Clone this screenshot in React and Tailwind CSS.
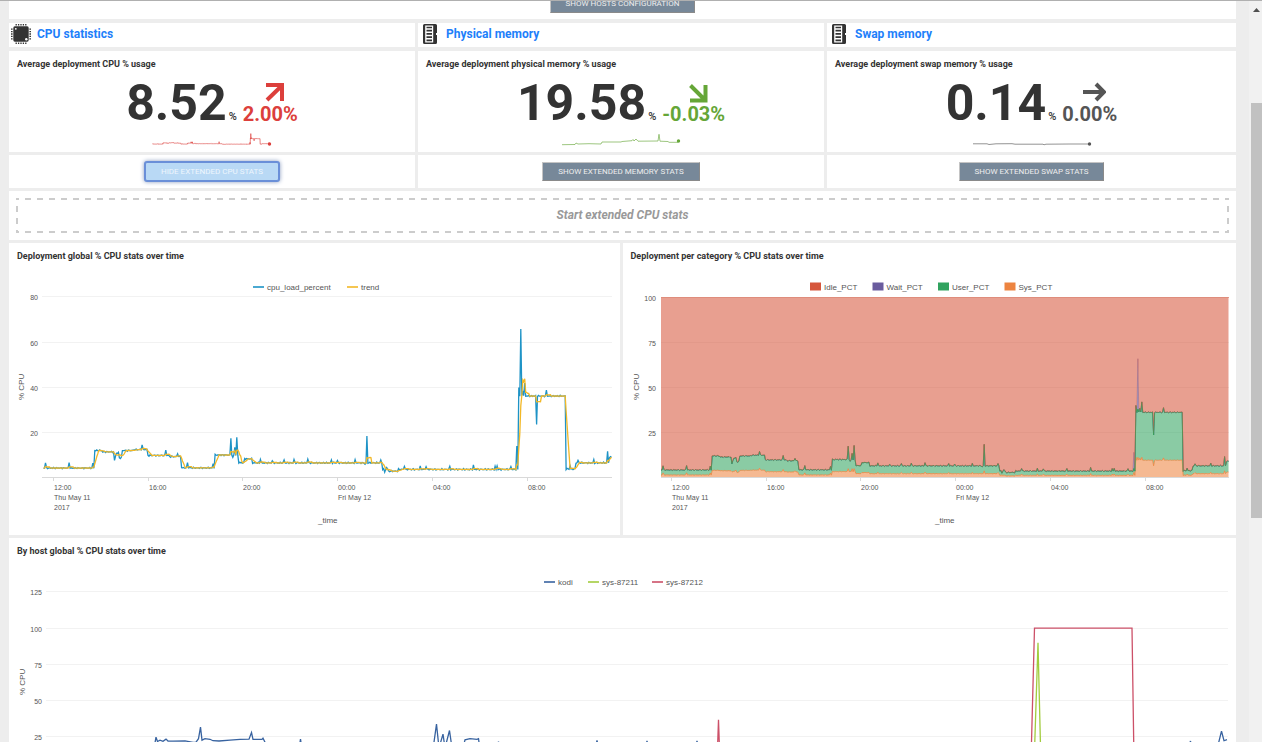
import React from 'react';

const POINTS = 576;

// [first five minute sample, level]
const LEVELS = [
  [0, 4.2], [26, 12], [30, 11.4], [36, 9.6], [37, 10.8], [38, 8.8], [40, 12], [46, 12.4],
  [53, 9.8], [64, 9.3], [70, 4.3], [87, 10], [99, 6.6], [102, 8.3], [106, 6.5],
  [172, 3.8], [175, 2.8], [180, 3.6], [241, 36.2], [265, 3.8], [270, 6.5], [287, 9],
];

const SPIKES = {
  1: 6.5, 13: 6.6, 25: 6.4, 36: 7.6, 38: 11.2, 39: 8.4, 50: 14.5, 62: 12.2, 68: 10.6, 73: 6.6, 86: 6.2,
  95: 17.4, 96: 9, 97: 13.4, 98: 17.8, 110: 8.1, 116: 7.4, 122: 7.8, 127: 8, 134: 8.2,
  146: 7.8, 149: 7.5, 158: 7.9, 163: 5.9, 164: 18.4, 171: 7.8, 173: 2.4, 174: 4.4, 183: 5, 191: 5.2, 194: 4.8,
  206: 5, 218: 5.6, 229: 5, 230: 5.1, 237: 4.9, 240: 14, 241: 40, 242: 66, 243: 38.5, 244: 42,
  250: 23.6, 255: 38.8, 267: 5.2, 271: 7.6, 279: 8, 286: 11.6,
};

function levelAt(sample) {
  let value = LEVELS[0][1];
  LEVELS.forEach(([from, level]) => {
    if (sample >= from) value = level;
  });
  return value;
}

const noise = (i) => Math.sin(i * 12.9898) * Math.cos(i * 4.137) * 0.35;

const cpu = Array.from({ length: POINTS + 1 }, (_, i) => SPIKES[i / 2] ?? levelAt(i / 2) + noise(i));

const trend = cpu.map((_, i) => {
  const part = cpu.slice(Math.max(0, i - 4), i + 1);
  return part.reduce((a, b) => a + b, 0) / part.length;
});

const user = cpu.map((v, i) => {
  if (i === 484) return 38;
  if (i === 480) return 5;
  return v;
});

const sys = cpu.map((v, i) => {
  if (i === 500) return 6.5;
  const base = levelAt(i / 2);
  const share = base > 30 ? 9.6 : base * 0.33;
  return share + (v > base + 1 ? Math.min(1.6, (v - base) * 0.5) : noise(i) * 0.5);
});

const toPoints = (series, left, width, zero, unit) =>
  series
    .map((v, i) => `${(left + (i * width) / POINTS).toFixed(1)},${(zero - v * unit).toFixed(1)}`)
    .join(' ');

const toArea = (upper, lower, left, width, zero, unit) =>
  `${toPoints(upper, left, width, zero, unit)} ${toPoints(lower, left, width, zero, unit)
    .split(' ')
    .reverse()
    .join(' ')}`;

const TIMES = [
  ['12:00', 'Thu May 11', '2017'],
  ['16:00'],
  ['20:00'],
  ['00:00', 'Fri May 12'],
  ['04:00'],
  ['08:00'],
];

const hosts = [
  {
    color: '#3863a0',
    points: [
      [0, 15], [107, 16], [108, 20.5], [109, 24.5], [110.5, 21.5], [113, 22.4], [116, 21.6], [119, 23.1], [121, 21.8],
      [126, 21.7], [138, 21.9], [146, 20.8], [149, 21], [151.5, 23.4], [153.5, 31.4], [155, 22.4], [158, 23.4],
      [163, 23], [166, 22], [172, 21.8], [183, 22.4], [193, 23], [202, 23.1], [204.5, 27.7], [206, 22.9], [215, 22.9],
      [216, 23.8], [218, 21], [220, 16], [252, 16], [253.5, 23.1], [255, 16], [386, 16], [389.5, 33.5], [392, 17],
      [396, 26.6], [398, 17], [402.5, 29.1], [405, 17], [416, 17], [418, 22.6], [423, 23.4], [430, 22.9], [431.5, 23.4],
      [433, 16], [450, 16], [451.5, 21.4], [453, 16], [548, 16], [550, 22.2], [552, 16], [598, 16], [600, 21.8],
      [602, 16], [648, 16], [650, 21.8], [652, 16], [1141, 16], [1143.5, 21.8], [1145, 16], [1170, 16], [1174.5, 28.7],
      [1177, 22], [1180, 22.8],
    ],
  },
  { color: '#a2cc3e', points: [[0, 4], [987, 4], [991, 89.8], [994, 4], [1180, 4]] },
  {
    color: '#cc5068',
    points: [[0, 6], [670, 6], [671.5, 36.5], [673, 6], [984, 8], [987.5, 100], [1085, 100], [1087, 8], [1180, 6]],
  },
];

function Legend({ items, square }) {
  return items.map(({ x, label, color }) => (
    <g key={label}>
      {square ? (
        <rect x={x} y="21.5" width="11" height="8" fill={color} />
      ) : (
        <path d={`M${x} 26h11`} stroke={color} strokeOpacity="0.8" strokeWidth="2" />
      )}
      <text x={x + 14} y="29" fontSize="8" fill="#555">{label}</text>
    </g>
  ));
}

function TimeAxis({ first, step, left, right, title }) {
  return (
    <g>
      <path d={`M${left} 216.5H${right}`} stroke="#d9d9d9" />
      {TIMES.map((lines, i) => (
        <g key={lines[0]}>
          <path d={`M${Math.round(first + i * step) + 0.5} 217v3`} stroke="#d9d9d9" />
          {lines.map((line, n) => (
            <text key={line} x={Math.round(first + i * step) + 1} y={229 + n * 10} fontSize="7" fill="#555">
              {line}
            </text>
          ))}
        </g>
      ))}
      <text x={title} y="262" fontSize="8" fill="#555">_time</text>
    </g>
  );
}

function ValueAxis({ labels, right, titleX, left, end }) {
  return (
    <g>
      {labels.map(([value, y]) => (
        <g key={value}>
          <path d={`M${left} ${y}H${end}`} stroke="#f2f2f2" />
          <text x={right} y={y + 3} fontSize="7" textAnchor="end" fill="#555">{value}</text>
        </g>
      ))}
      <text transform={`translate(${titleX} 139) rotate(-90)`} fontSize="8" fill="#555">% CPU</text>
    </g>
  );
}

function Chart({ width, label, children }) {
  return (
    <svg
      className="block h-[274px] w-full font-['Liberation_Sans',sans-serif]"
      viewBox={`0 0 ${width} 274`}
      preserveAspectRatio="xMinYMin meet"
      role="img"
      aria-label={label}
    >
      {children}
    </svg>
  );
}

function GlobalChart() {
  const box = [34.5, 568, 216.5, 2.25];
  return (
    <Chart width={610} label="Deployment global CPU">
      <Legend
        items={[
          { x: 244, label: 'cpu_load_percent', color: '#1e93c6' },
          { x: 338, label: 'trend', color: '#f2b827' },
        ]}
      />
      <ValueAxis
        labels={[[80, 35.5], [60, 81.5], [40, 126.5], [20, 171.5]]}
        left={33}
        end={603}
        right={29}
        titleX={15}
      />
      <TimeAxis first={44} step={94.7} left={33} right={603} title={309} />
      <polyline points={toPoints(cpu, ...box)} fill="none" stroke="#1e93c6" strokeWidth="1.3" />
      <polyline points={toPoints(trend, ...box)} fill="none" stroke="#f2b827" strokeWidth="1.3" />
    </Chart>
  );
}

function CategoryChart() {
  const zeros = cpu.map(() => 0);
  const full = cpu.map(() => 100);
  const box = [38, 567.5, 216.5, 1.8];
  return (
    <Chart width={613} label="Deployment CPU per category">
      <Legend
        square
        items={[
          { x: 187, label: 'Idle_PCT', color: '#d6563c' },
          { x: 249.5, label: 'Wait_PCT', color: '#6a5c9e' },
          { x: 315, label: 'User_PCT', color: '#31a35f' },
          { x: 381.5, label: 'Sys_PCT', color: '#ed8440' },
        ]}
      />
      <ValueAxis
        labels={[[100, 36.5], [75, 81.5], [50, 126.5], [25, 171.5]]}
        left={38}
        end={606}
        right={33}
        titleX={16}
      />
      <polygon points={toArea(sys, zeros, ...box)} fill="#ed8440" fillOpacity="0.57" />
      <polygon points={toArea(user, sys, ...box)} fill="#31a35f" fillOpacity="0.57" />
      <polygon points={toArea(cpu, user, ...box)} fill="#6a5c9e" fillOpacity="0.6" stroke="#6a5c9e" strokeOpacity="0.5" />
      <polyline points={toPoints(sys, ...box)} fill="none" stroke="#ed8440" strokeOpacity="0.8" />
      <polyline points={toPoints(user, ...box)} fill="none" stroke="#31a35f" />
      <polygon points={toArea(full, cpu, ...box)} fill="#d6563c" fillOpacity="0.57" />
      <path d="M38 36.5H606" stroke="#d6563c" strokeOpacity="0.5" />
      <TimeAxis first={48} step={94.7} left={38} right={606} title={312} />
    </Chart>
  );
}

function HostChart() {
  return (
    <Chart width={1227} label="CPU by host">
      <Legend
        items={[
          { x: 535, label: 'kodi', color: '#3863a0' },
          { x: 579, label: 'sys-87211', color: '#a2cc3e' },
          { x: 643, label: 'sys-87212', color: '#cc5068' },
        ]}
      />
      <ValueAxis
        labels={[[125, 35.5], [100, 72.5], [75, 108.5], [50, 144.5], [25, 180.5]]}
        left={37}
        end={1219}
        right={33}
        titleX={16}
      />
      {hosts.map(({ color, points }) => (
        <polyline
          key={color}
          points={points.map(([x, v]) => `${38 + x},${216.5 - v * 1.444}`).join(' ')}
          fill="none"
          stroke={color}
          strokeWidth="1.3"
        />
      ))}
    </Chart>
  );
}

function CpuIcon() {
  return (
    <svg width="20" height="20" viewBox="0 0 20 20" aria-hidden="true">
      <path
        d="M5.2 0v20M7.6 0v20M10 0v20M12.4 0v20M14.8 0v20M0 5.2h20M0 7.6h20M0 10h20M0 12.4h20M0 14.8h20"
        stroke="#333"
        strokeWidth="1.3"
      />
      <rect x="1.6" y="1.6" width="16.8" height="16.8" rx="2" fill="#fff" />
      <rect x="2.3" y="2.3" width="15.4" height="15.4" rx="1.6" fill="#333" />
      <circle cx="4.8" cy="4.8" r="0.9" fill="#fff" />
      <circle cx="15.3" cy="15.3" r="1.2" fill="#fff" />
    </svg>
  );
}

function MemoryIcon() {
  return (
    <svg width="14" height="20" viewBox="0 0 14 20" aria-hidden="true">
      <path d="M1.5 0h11Q14 0 14 1.5V9h-1v2h1v7.5q0 1.5-1.5 1.5h-11Q0 20 0 18.5v-17Q0 0 1.5 0z" fill="#333" />
      <path d="M2.2 1.5h8v17h-8z" fill="#fff" />
      <path d="M3.5 3.5h5.5M3.5 6.7h5.5M3.5 9.9h5.5M3.5 13.1h5.5M3.5 16.3h5.5" stroke="#333" strokeWidth="1.7" />
    </svg>
  );
}

const ARROWS = {
  up: 'M4 4H20V20M20 4.5L5 19',
  down: 'M4 19.5H19.5V4M19 19L4.5 4.5',
  flat: 'M1 11H22M14 3L22 11L14 19',
};

const METRICS = [
  {
    title: 'CPU statistics',
    icon: <CpuIcon />,
    caption: 'Average deployment CPU % usage',
    value: '8.52',
    change: '2.00%',
    arrow: 'up',
    color: '#dc3f3c',
    line: toPoints(cpu, 0.5, 117, 11.8, 0.17),
    dotY: 11,
    button: 'Hide extended CPU stats',
    active: true,
  },
  {
    title: 'Physical memory',
    icon: <MemoryIcon />,
    caption: 'Average deployment physical memory % usage',
    value: '19.58',
    change: '-0.03%',
    arrow: 'down',
    color: '#65a637',
    line: '1,11.7 14,11.5 15,10 17,11 28,10.7 40,11 41,9 60,9 61,8.5 71,7.7 72,6.5 73,8 75,6 77,8.2 97,8 98,1.3 99,8.2 107,8.5 108,9.3 117,9.3',
    dotY: 8,
    button: 'Show extended memory stats',
  },
  {
    title: 'Swap memory',
    icon: <MemoryIcon />,
    caption: 'Average deployment swap memory % usage',
    value: '0.14',
    change: '0.00%',
    arrow: 'flat',
    color: '#555555',
    line: '1,10.8 15,10.8 17,11.5 24,10.8 40,10.7 43,11.2 71,11.2 72,11.8 74,11.2 98,11 117,11',
    dotY: 11,
    button: 'Show extended swap stats',
  },
];

function Button({ children, active }) {
  const look = active
    ? 'rounded-xs border-[#6a8fd8] bg-[#b9d9f5] text-[#eef6fd] ring-1 ring-[#6a8fd8] shadow-[0_0_4px_1px_#8a9cc0]'
    : 'border-t-[#c4c4c4] border-r-[#8a8a8a] border-b-[#8a8a8a] border-l-[#c4c4c4] bg-[#778899] text-[#eeeeee]';
  return (
    <button type="button" className={`border px-[15px] text-[8px] leading-[17px] uppercase ${look}`}>
      {children}
    </button>
  );
}

function PanelTitle({ children }) {
  return <h3 className="px-2 pt-2 text-[9px] leading-[10px] font-bold">{children}</h3>;
}

function Metric({ title, icon, caption, value, change, arrow, color, line, dotY, button, active }) {
  return (
    <section className="mr-[3px] last:mr-0">
      <div className="mb-1 flex h-6 items-start gap-1 bg-white">
        <span className="flex w-6 justify-center pt-px">{icon}</span>
        <h2 className="text-[12px] leading-[22px] font-bold text-[#1e80fa]">{title}</h2>
      </div>
      <div className="mb-[3px] bg-white pb-[3px]">
        <PanelTitle>{caption}</PanelTitle>
        <div className="mt-[10px] flex items-start justify-center">
          <div className="flex items-baseline gap-[2px]">
            <span className="text-[50px] leading-[48px] font-bold">{value}</span>
            <span className="text-[11px] leading-[11px] font-medium">%</span>
          </div>
          <div className="ml-[6px] flex flex-col items-center pt-[2px]" style={{ color }}>
            <svg className="ml-2" width="24" height="22" viewBox="0 0 24 22" aria-hidden="true">
              <path d={ARROWS[arrow]} fill="none" stroke="currentColor" strokeWidth="4" />
            </svg>
            <span className="text-[20px] leading-[22px] font-bold">{change}</span>
          </div>
        </div>
        <svg className="mx-auto mt-[6px] block" width="120" height="16" viewBox="0 0 120 16" aria-hidden="true">
          <polyline points={line} fill="none" stroke={color} strokeWidth="0.8" strokeOpacity="0.8" />
          <circle cx="117.5" cy={dotY} r="1.7" fill={color} />
        </svg>
      </div>
      <div className="flex justify-center bg-white py-[7px]">
        <Button active={active}>{button}</Button>
      </div>
    </section>
  );
}

export default function App() {
  return (
    <div className="flex h-screen overflow-hidden border-t border-[#b0b0b0] bg-[#ededed] font-['Roboto',sans-serif] text-[#333]">
      <main className="min-w-0 flex-1 pr-[13px] pl-[9px]">
        <div className="mb-1 flex h-[18px] items-end justify-center overflow-hidden bg-white pb-[6px]">
          <Button>Show hosts configuration</Button>
        </div>

        <div className="mb-[3px] grid grid-cols-3">
          {METRICS.map((metric) => (
            <Metric key={metric.title} {...metric} />
          ))}
        </div>

        <div className="mb-[3px] bg-white p-[7px]">
          <p className="py-[7px] text-center text-[12px] leading-[21px] font-bold text-[#999] italic [background:repeating-linear-gradient(90deg,#ccc_0_3px,#0000_3px_9px,#ccc_9px_12px)_top/100%_2px_no-repeat,repeating-linear-gradient(90deg,#ccc_0_3px,#0000_3px_9px,#ccc_9px_12px)_bottom/100%_2px_no-repeat,repeating-linear-gradient(180deg,#ccc_0_2px,#0000_2px_8px,#ccc_8px_12px)_left/2px_100%_no-repeat,repeating-linear-gradient(180deg,#ccc_0_2px,#0000_2px_8px,#ccc_8px_12px)_right/2px_100%_no-repeat]">
            Start extended CPU stats
          </p>
        </div>

        <div className="mb-[3px] grid grid-cols-2">
          <section className="mr-[3px] bg-white">
            <PanelTitle>Deployment global % CPU stats over time</PanelTitle>
            <GlobalChart />
          </section>
          <section className="bg-white">
            <PanelTitle>Deployment per category % CPU stats over time</PanelTitle>
            <CategoryChart />
          </section>
        </div>

        <section className="bg-white">
          <PanelTitle>By host global % CPU stats over time</PanelTitle>
          <HostChart />
        </section>
      </main>

      <div className="flex w-[13px] flex-col items-end bg-[#f1f1f1]" aria-hidden="true">
        <div className="flex h-[102px] w-[11px] justify-center pt-[7px]">
          <svg width="7" height="4" viewBox="0 0 7 4">
            <path d="M3.5 0L7 4H0z" fill="#505050" />
          </svg>
        </div>
        <div className="h-[56%] w-[11px] bg-[#c1c1c1]" />
      </div>
    </div>
  );
}
